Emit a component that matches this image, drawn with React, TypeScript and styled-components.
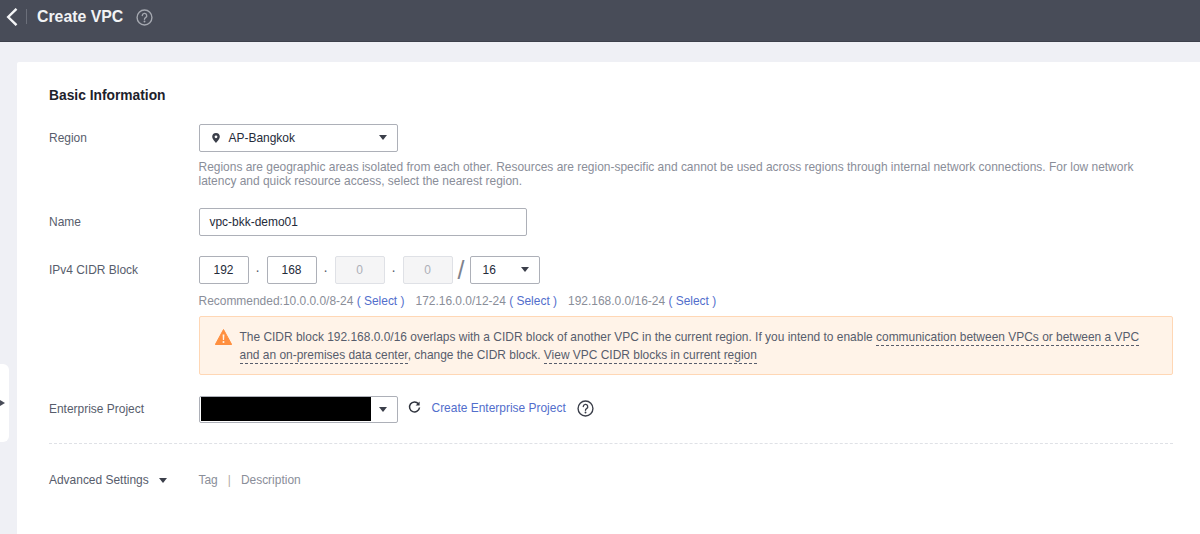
import React from "react";
import styled, { createGlobalStyle } from "styled-components";

const Global = createGlobalStyle`
  html, body { margin: 0; padding: 0; height: 100%; overflow: hidden; background: #eff0f5; }
  body { font-family: "Liberation Sans", Arial, sans-serif; font-size: 11.96px; color: #575d6c; }
`;
const Page = styled.div`
  width: 1200px; height: 534px; position: relative; overflow: hidden;
  display: flex; flex-direction: column; background: #eff0f5;
`;
const Header = styled.header`
  height: 33px; flex: none; background: #484c58; border-bottom: 1px solid #3c404b;
  display: flex; align-items: center; box-sizing: content-box; padding: 0 0 8px 5px;
`;
const Sep = styled.span`
  width: 1px; height: 15px; background: #6b6f7a; margin: 0 10px 0 7px;
`;
const Title = styled.h1`
  margin: 0; font-size: 15.85px; font-weight: 700; color: #f2f3f5;
`;
const HeaderHelp = styled.span`
  display: flex; margin-left: 12.5px; position: relative; top: 1px;
`;
const Card = styled.main`
  margin: 20px 0 0 17px; flex: 1; background: #fff; border-radius: 2px 0 0 0;
  padding: 26px 27px 0 32px; display: flex; flex-direction: column;
`;
const SectionTitle = styled.h2`
  margin: 0 0 20px; font-size: 13.8px; line-height: 16px; font-weight: 700; color: #1d212b;
`;
const Row = styled.div<{ $mb: number }>`
  display: grid; grid-template-columns: 149.5px 1fr; margin-bottom: ${p => p.$mb}px;
`;
const Label = styled.label<{ $top?: number }>`
  line-height: 27px; color: #575d6c; position: relative; top: ${p => p.$top ?? 0}px;
`;
const Field = styled.div`
  min-width: 0; display: flex; flex-direction: column;
`;
const Box = styled.div<{ $w: number; $disabled?: boolean }>`
  width: ${p => p.$w}px; height: 27.5px; box-sizing: border-box; flex: none;
  border: 1px solid ${p => (p.$disabled ? "#dfe1e6" : "#adb0b8")}; border-radius: 2px;
  background: ${p => (p.$disabled ? "#f5f5f6" : "#fff")}; color: ${p => (p.$disabled ? "#adb0b8" : "#252b3a")};
  display: flex; align-items: center; line-height: 14px;
`;
const NameBox = styled(Box)`
  padding-left: 10px;
`;
const Octet = styled(Box)`
  justify-content: center;
`;
const SelectBox = styled(Box)`
  padding: 0 10px 0 12px; justify-content: space-between;
`;
const RegionValue = styled.span`
  display: flex; align-items: center; gap: 9px;
`;
const Caret = styled.i`
  width: 0; height: 0; border-left: 4px solid transparent; border-right: 4px solid transparent;
  border-top: 5px solid #3b3f4a; display: block; flex: none;
`;
const Hint = styled.p`
  margin: 8.5px 0 0; line-height: 14px; color: #8a8e99; width: 950px;
`;
const CidrRow = styled.div`
  display: flex; align-items: center;
`;
const Dot = styled.span`
  width: 18px; text-align: center; font-size: 14px; color: #575d6c;
`;
const Slash = styled.span`
  width: 17px; text-align: center; font-size: 25px; line-height: 24px; color: #7f838e;
`;
const Recommend = styled.div`
  margin-top: 10px; line-height: 14px; color: #8a8e99; display: flex; gap: 11px;
`;
const Link = styled.a`
  color: #526ecc; text-decoration: none;
`;
const Alert = styled.div`
  margin-top: 8.5px; height: 59px; box-sizing: border-box; width: 974.5px;
  background: #fff3e8; border: 1px solid #ffd7b5; border-radius: 2px;
  display: flex; padding: 11px 20px 0 15px; gap: 8px; color: #575d6c; line-height: 18px;
`;
const AlertIcon = styled.span`
  flex: none; display: flex; height: 18px; position: relative; top: 1px;
`;
const AlertText = styled.p`
  margin: 0; width: 920px;
`;
const Dashed = styled.span`
  border-bottom: 1px dashed #575d6c; padding-bottom: 1px;
`;
const ProjectRow = styled.div`
  display: flex; align-items: center;
`;
const Redaction = styled.div`
  width: 170.5px; height: 24px; background: #000;
`;
const ProjectBox = styled(Box)`
  padding: 1px 10px 1px 1px; justify-content: space-between;
`;
const Refresh = styled.span`
  display: flex; margin: 0 10.5px 4px 10.5px;
`;
const ProjectLink = styled(Link)`
  margin-bottom: 3px;
`;
const ProjectHelp = styled.span`
  display: flex; margin-left: 11px; margin-bottom: 1px;
`;
const Divider = styled.hr`
  margin: 0; border: 0; border-top: 1px dashed #dfe1e6;
`;
const Advanced = styled.div`
  margin-top: 29px; display: grid; grid-template-columns: 149.5px 1fr; line-height: 14px;
`;
const AdvLabel = styled.span`
  display: flex; align-items: center; gap: 10px; color: #575d6c;
`;
const Tabs = styled.span`
  display: flex; color: #8a8e99; gap: 10px;
`;
const TabSep = styled.span`
  color: #b3a99f;
`;
const SideTab = styled.div`
  position: absolute; left: 0; top: 364px; width: 9px; height: 78px; background: #fff;
  border-radius: 0 6px 6px 0; display: flex; align-items: center;
`;
const SideArrow = styled.i`
  width: 0; height: 0; display: block; border-top: 3.5px solid transparent; border-bottom: 3.5px solid transparent;
  border-left: 5px solid #484c58;
`;

const Help = ({ size, color, w }: { size: number; color: string; w: number }) => (
  <svg width={size} height={size} viewBox="0 0 16 16" fill="none">
    <circle cx="8" cy="8" r="7" stroke={color} strokeWidth={w} />
    <path d="M5.9 6.2A2.1 2.1 0 1 1 9 8.1c-.7.4-1 .8-1 1.6" stroke={color} strokeWidth={w} strokeLinecap="round" />
    <circle cx="8" cy="11.8" r=".9" fill={color} />
  </svg>
);

export default function App() {
  return (
    <Page>
      <Global />
      <Header>
        <svg width="14" height="18" viewBox="0 0 14 18" fill="none">
          <path d="M11.5.8 3.2 9l8.3 8.2" stroke="#f4f5f7" strokeWidth="2.4" />
        </svg>
        <Sep />
        <Title>Create VPC</Title>
        <HeaderHelp><Help size={17} color="#a5a8b0" w={1.3} /></HeaderHelp>
      </Header>
      <Card>
        <SectionTitle>Basic Information</SectionTitle>
        <Row $mb={20}>
          <Label $top={1}>Region</Label>
          <Field>
            <SelectBox $w={199}>
              <RegionValue>
                <svg width="8" height="10" viewBox="0 0 8 10">
                  <path fillRule="evenodd" d="M4 0a3.8 3.8 0 0 1 3.8 3.8C7.8 6.2 4 10 4 10S.2 6.2.2 3.8A3.8 3.8 0 0 1 4 0Zm0 2.4a1.4 1.4 0 1 0 0 2.8 1.4 1.4 0 0 0 0-2.8Z" fill="#3b3f4a" />
                </svg>
                AP-Bangkok
              </RegionValue>
              <Caret />
            </SelectBox>
            <Hint>Regions are geographic areas isolated from each other. Resources are region-specific and cannot be used across regions through internal network connections. For low network latency and quick resource access, select the nearest region.</Hint>
          </Field>
        </Row>
        <Row $mb={20.5}>
          <Label $top={1}>Name</Label>
          <Field><NameBox $w={328}>vpc-bkk-demo01</NameBox></Field>
        </Row>
        <Row $mb={20.5}>
          <Label $top={1}>IPv4 CIDR Block</Label>
          <Field>
            <CidrRow>
              <Octet $w={50}>192</Octet><Dot>·</Dot>
              <Octet $w={50}>168</Octet><Dot>·</Dot>
              <Octet $w={50} $disabled>0</Octet><Dot>·</Dot>
              <Octet $w={50} $disabled>0</Octet>
              <Slash>/</Slash>
              <SelectBox $w={70}>16<Caret /></SelectBox>
            </CidrRow>
            <Recommend>
              <span>Recommended:10.0.0.0/8-24 <Link>( Select )</Link></span>
              <span>172.16.0.0/12-24 <Link>( Select )</Link></span>
              <span>192.168.0.0/16-24 <Link>( Select )</Link></span>
            </Recommend>
            <Alert>
              <AlertIcon>
                <svg width="17" height="16" viewBox="0 0 17 16">
                  <path d="M8.5.5 16.7 15.5H.3Z" fill="#ff8f3f" stroke="#ff8f3f" strokeLinejoin="round" />
                  <path d="M7.6 5.5h1.8l-.3 5.5H7.9Z" fill="#fff3e8" />
                  <circle cx="8.5" cy="12.9" r="1" fill="#fff3e8" />
                </svg>
              </AlertIcon>
              <AlertText>
                The CIDR block 192.168.0.0/16 overlaps with a CIDR block of another VPC in the current region. If you intend to enable <Dashed>communication between VPCs or between a VPC</Dashed> <Dashed>and an on-premises data center</Dashed>, change the CIDR block. <Dashed>View VPC CIDR blocks in current region</Dashed>
              </AlertText>
            </Alert>
          </Field>
        </Row>
        <Row $mb={20}>
          <Label>Enterprise Project</Label>
          <Field>
            <ProjectRow>
              <ProjectBox $w={199}><Redaction /><Caret /></ProjectBox>
              <Refresh>
                <svg width="13" height="13" viewBox="0 0 13 13" fill="none">
                  <path d="M10.4 2.8A5 5 0 1 0 11.5 6.5" stroke="#2f333d" strokeWidth="1.5" />
                  <path d="M11.6.4v4H7.6Z" fill="#2f333d" />
                </svg>
              </Refresh>
              <ProjectLink>Create Enterprise Project</ProjectLink>
              <ProjectHelp><Help size={17} color="#3b3f4a" w={1.3} /></ProjectHelp>
            </ProjectRow>
          </Field>
        </Row>
        <Divider />
        <Advanced>
          <AdvLabel>Advanced Settings <Caret /></AdvLabel>
          <Tabs><span>Tag</span><TabSep>|</TabSep><span>Description</span></Tabs>
        </Advanced>
      </Card>
      <SideTab><SideArrow /></SideTab>
    </Page>
  );
}
